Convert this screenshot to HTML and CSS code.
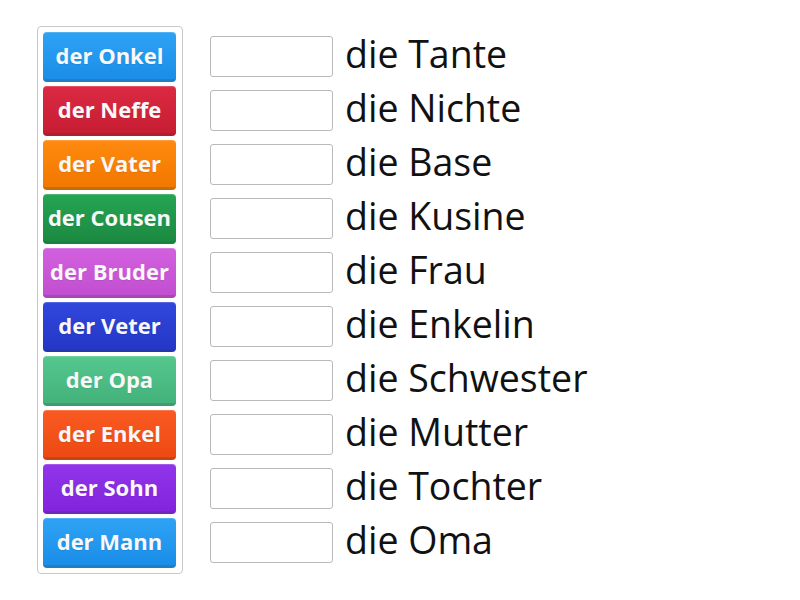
FILE: index.html
```html
<!DOCTYPE html>
<html lang="de">
<head>
<meta charset="utf-8">
<title>Match up</title>
<link rel="stylesheet" href="styles.css">
</head>
<body>
<div class="page">
  <div class="bank">
    <div class="tile c1">der Onkel</div>
    <div class="tile c2">der Neffe</div>
    <div class="tile c3">der Vater</div>
    <div class="tile c4">der Cousen</div>
    <div class="tile c5">der Bruder</div>
    <div class="tile c6">der Veter</div>
    <div class="tile c7">der Opa</div>
    <div class="tile c8">der Enkel</div>
    <div class="tile c9">der Sohn</div>
    <div class="tile c10">der Mann</div>
  </div>
  <div class="targets">
    <div class="row"><div class="slot"></div><span class="word">die Tante</span></div>
    <div class="row"><div class="slot"></div><span class="word">die Nichte</span></div>
    <div class="row"><div class="slot"></div><span class="word">die Base</span></div>
    <div class="row"><div class="slot"></div><span class="word">die Kusine</span></div>
    <div class="row"><div class="slot"></div><span class="word">die Frau</span></div>
    <div class="row"><div class="slot"></div><span class="word">die Enkelin</span></div>
    <div class="row"><div class="slot"></div><span class="word">die Schwester</span></div>
    <div class="row"><div class="slot"></div><span class="word">die Mutter</span></div>
    <div class="row"><div class="slot"></div><span class="word">die Tochter</span></div>
    <div class="row"><div class="slot"></div><span class="word">die Oma</span></div>
  </div>
</div>
</body>
</html>
```

FILE: styles.css
```css
html, body {
  margin: 0;
  padding: 0;
  background: #ffffff;
  font-family: "Open Sans", "Noto Sans", sans-serif;
}

.page {
  display: flex;
  align-items: flex-start;
  padding: 26px 0 0 37px;
}

.bank {
  display: flex;
  flex-direction: column;
  gap: 4px;
  width: 133px;
  padding: 5px 6px 5px 5px;
  border: 1px solid #c8c8c8;
  border-radius: 4px;
}

.tile {
  height: 45px;
  padding-bottom: 2px;
  border-radius: 4px;
  border-bottom: 3px solid rgba(0, 0, 0, 0.22);
  color: #f8f8f8;
  font-weight: 700;
  font-size: 22px;
  display: flex;
  align-items: center;
  justify-content: center;
  white-space: nowrap;
  box-shadow: inset 0 1px 0 rgba(255, 255, 255, 0.18);
  text-shadow: 0 1px 1px rgba(0, 0, 0, 0.08);
}

.c1, .c10 { background: linear-gradient(#2ea3f5, #1a8ee8); }
.c2 { background: linear-gradient(#db2a43, #c71d33); }
.c3 { background: linear-gradient(#ff8a10, #f27800); }
.c4 { background: linear-gradient(#25a552, #1c8a42); }
.c5 { background: linear-gradient(#d260de, #c24fd0); }
.c6 { background: linear-gradient(#3147dd, #2437c6); }
.c7 { background: linear-gradient(#55c88e, #43b27b); }
.c8 { background: linear-gradient(#fa5a22, #ec4a12); }
.c9 { background: linear-gradient(#9135ea, #8124dc); }

.targets {
  display: flex;
  flex-direction: column;
  gap: 13px;
  margin: 10px 0 0 27px;
}

.row {
  display: flex;
  align-items: center;
  gap: 12px;
  height: 41px;
}

.slot {
  width: 121px;
  height: 39px;
  border: 1px solid #b9b9b9;
  border-radius: 3px;
  background: #fff;
}

.word {
  font-size: 37.5px;
  color: #111111;
  white-space: nowrap;
  line-height: 41px;
  margin-top: -6px;
}
```
